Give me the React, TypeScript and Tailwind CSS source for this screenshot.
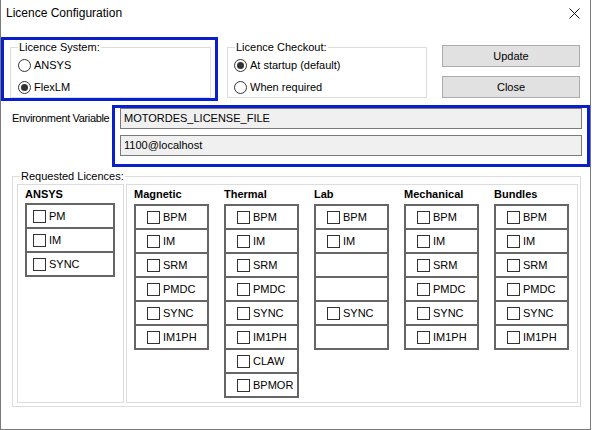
import React from "react";

const COLUMNS: { title: string; items: string[] }[] = [
  { title: "Magnetic", items: ["BPM", "IM", "SRM", "PMDC", "SYNC", "IM1PH"] },
  { title: "Thermal", items: ["BPM", "IM", "SRM", "PMDC", "SYNC", "IM1PH", "CLAW", "BPMOR"] },
  { title: "Lab", items: ["BPM", "IM", "", "", "SYNC", ""] },
  { title: "Mechanical", items: ["BPM", "IM", "SRM", "PMDC", "SYNC", "IM1PH"] },
  { title: "Bundles", items: ["BPM", "IM", "SRM", "PMDC", "SYNC", "IM1PH"] },
];

function Radio({ label, checked }: { label: string; checked?: boolean }) {
  return (
    <div className="flex items-center h-[22px]">
      <span className="w-[13px] h-[13px] rounded-full border border-[#333] bg-white flex items-center justify-center">
        {checked && <span className="w-[7px] h-[7px] rounded-full bg-[#333]" />}
      </span>
      <span className="ml-[3px]">{label}</span>
    </div>
  );
}

function GroupBox({ legend, className, children }: { legend: string; className?: string; children?: React.ReactNode }) {
  return (
    <div className={"relative border border-[#dcdcdc] " + (className ?? "")}>
      <span className="absolute -top-[7px] left-[7px] bg-white px-px leading-[13px]">{legend}</span>
      {children}
    </div>
  );
}

function CheckTable({ items, wide }: { items: string[]; wide?: boolean }) {
  return (
    <div className={"border-x-2 border-t-2 border-[#656565] " + (wide ? "w-[90px]" : "w-[75px]")}>
      {items.map((it, i) => (
        <div
          key={i}
          className={"h-[24px] border-b-2 border-[#656565] flex items-center " + (wide ? "pl-[6px]" : "pl-[11px]")}
        >
          {it && (
            <>
              <span className="w-[13px] h-[13px] border border-[#333] bg-white shrink-0" />
              <span className="ml-[3px]">{it}</span>
            </>
          )}
        </div>
      ))}
    </div>
  );
}

export default function App() {
  return (
    <div className="w-[591px] h-[430px] bg-white border-x border-b border-[#7a7a7a] flex flex-col font-['Liberation_Sans',Arial,sans-serif] text-[11px] text-black overflow-hidden">
      {/* title bar */}
      <div className="h-[26px] flex items-center justify-between pl-[5px] pr-[10px] shrink-0">
        <span className="text-[12px]">Licence Configuration</span>
        <svg width="11" height="11" viewBox="0 0 11 11" className="mt-px">
          <path d="M0.5 0.5 L10.5 10.5 M10.5 0.5 L0.5 10.5" stroke="#111" strokeWidth="1" />
        </svg>
      </div>

      {/* top section */}
      <div className="flex items-start mt-[11px] shrink-0">
        <div className="w-[217px] h-[64px] border-[3px] border-[#0a1fcc] pl-[6px] pt-[7px] pr-[4px]">
          <GroupBox legend="Licence System:" className="h-[51px] pl-[7px] pt-[6px]">
            <Radio label="ANSYS" />
            <Radio label="FlexLM" checked />
          </GroupBox>
        </div>

        <GroupBox legend="Licence Checkout:" className="ml-[9px] mt-[10px] w-[200px] h-[51px] pl-[6px] pt-[6px]">
          <Radio label="At startup (default)" checked />
          <Radio label="When required" />
        </GroupBox>

        <div className="ml-[15px] mt-[8px] flex flex-col gap-[9px]">
          <button className="w-[138px] h-[22px] bg-[#e1e1e1] border border-[#adadad] text-[11px]">Update</button>
          <button className="w-[138px] h-[22px] bg-[#e1e1e1] border border-[#adadad] text-[11px]">Close</button>
        </div>
      </div>

      {/* environment variable */}
      <div className="flex items-start mt-[4px] shrink-0">
        <div className="w-[111px] pl-[11px] pt-[7px] leading-[13px] whitespace-nowrap tracking-[-0.35px]">Environment Variable</div>
        <div className="w-[478px] h-[62px] border-[3px] border-[#0a1fcc] px-[5px] flex flex-col gap-[6px]">
          <div className="h-[21px] bg-[#f0f0f0] border border-[#7a7a7a] flex items-center pl-[3px]">MOTORDES_LICENSE_FILE</div>
          <div className="h-[21px] bg-[#f0f0f0] border border-[#7a7a7a] flex items-center pl-[3px]">1100@localhost</div>
        </div>
      </div>

      {/* requested licences */}
      <GroupBox legend="Requested Licences:" className="ml-[11px] mt-[9px] w-[569px] h-[231px] pl-[4px] pr-[2px] pt-[7px] pb-[3px] flex gap-[2px]">
        <div className="w-[107px] border border-[#dcdcdc] pl-[7px] pt-px">
          <div className="h-[16px] leading-[16px] font-bold">ANSYS</div>
          <div className="mt-[1px]">
            <CheckTable items={["PM", "IM", "SYNC"]} wide />
          </div>
        </div>
        <div className="flex-1 border border-[#dcdcdc] pl-[7px] pt-px flex gap-[15px]">
          {COLUMNS.map((c) => (
            <div key={c.title} className="flex flex-col">
              <div className="h-[16px] leading-[16px] font-bold">{c.title}</div>
              <div className="mt-[2px]">
                <CheckTable items={c.items} />
              </div>
            </div>
          ))}
        </div>
      </GroupBox>
    </div>
  );
}
